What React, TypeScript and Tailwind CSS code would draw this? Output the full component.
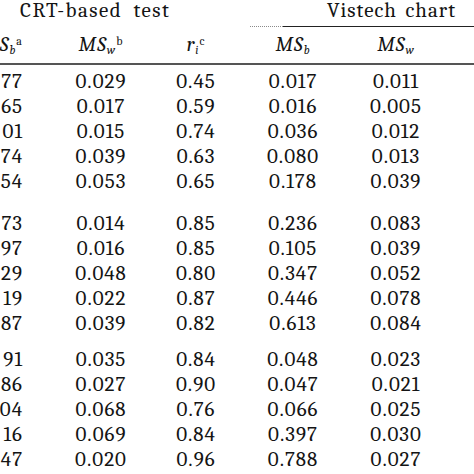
import React from "react";

type RowProps = { cells: React.ReactNode[]; header?: boolean };

function Row({ cells, header }: RowProps) {
  return (
    <div className={"flex h-[25px] leading-[25px] " + (header ? "italic" : "")}>
      <div className="w-[23px] flex justify-end whitespace-nowrap">{cells[0]}</div>
      <div className="ml-[48px] w-[60px] flex justify-center whitespace-nowrap">{cells[1]}</div>
      <div className="ml-[35px] w-[60px] flex justify-center whitespace-nowrap">{cells[2]}</div>
      <div className="ml-[37px] w-[60px] flex justify-center whitespace-nowrap">{cells[3]}</div>
      <div className="ml-[43px] w-[60px] flex justify-center whitespace-nowrap">{cells[4]}</div>
    </div>
  );
}

const groups: string[][][] = [
  [
    ["77", "0.029", "0.45", "0.017", "0.011"],
    ["65", "0.017", "0.59", "0.016", "0.005"],
    ["01", "0.015", "0.74", "0.036", "0.012"],
    ["74", "0.039", "0.63", "0.080", "0.013"],
    ["54", "0.053", "0.65", "0.178", "0.039"],
  ],
  [
    ["73", "0.014", "0.85", "0.236", "0.083"],
    ["97", "0.016", "0.85", "0.105", "0.039"],
    ["29", "0.048", "0.80", "0.347", "0.052"],
    ["19", "0.022", "0.87", "0.446", "0.078"],
    ["87", "0.039", "0.82", "0.613", "0.084"],
  ],
  [
    ["91", "0.035", "0.84", "0.048", "0.023"],
    ["86", "0.027", "0.90", "0.047", "0.021"],
    ["04", "0.068", "0.76", "0.066", "0.025"],
    ["16", "0.069", "0.84", "0.397", "0.030"],
    ["47", "0.020", "0.96", "0.788", "0.027"],
  ],
];

const sub = "text-[12px] not-italic";
const subI = "text-[12px]";

export default function App() {
  return (
    <div className="w-[474px] h-[474px] overflow-hidden bg-white text-[#141414] font-serif [font-family:Liberation_Serif] text-[21px] tracking-[1px]">
      <div className="flex h-[21px] leading-[21px] whitespace-nowrap">
        <span className="ml-[20px] tracking-[1.5px] [word-spacing:5px]">CRT-based test</span>
        <span className="ml-auto mr-[18px] tracking-[1px] [word-spacing:3px]">Vistech chart</span>
      </div>
      <div className="mt-[5px] flex h-[1px]">
        <div className="w-[250px]" />
        <div className="w-[33px] border-t border-dotted border-[#8a8a8a]" />
        <div className="flex-1 h-[1px] bg-[#222]" />
      </div>
      <div className="pt-[5px] pb-[6px]">
        <Row
          header
          cells={[
            <span>
              MS<sub className={subI}>b</sub>
              <sup className={sub}>a</sup>
            </span>,
            <span>
              MS<sub className={subI}>w</sub>
              <sup className={sub}>b</sup>
            </span>,
            <span>
              r<sub className={subI}>i</sub>
              <sup className={sub}>c</sup>
            </span>,
            <span>
              MS<sub className={subI}>b</sub>
            </span>,
            <span>
              MS<sub className={subI}>w</sub>
            </span>,
          ]}
        />
      </div>
      <div className="h-[2px] bg-[#555]" />
      <div className="pt-[4px] flex flex-col">
        {groups.map((g, gi) => (
          <div key={gi} className={gi === 1 ? "mt-[17px]" : gi === 2 ? "mt-[11px]" : ""}>
            {g.map((r, ri) => (
              <Row key={ri} cells={r} />
            ))}
          </div>
        ))}
      </div>
    </div>
  );
}
